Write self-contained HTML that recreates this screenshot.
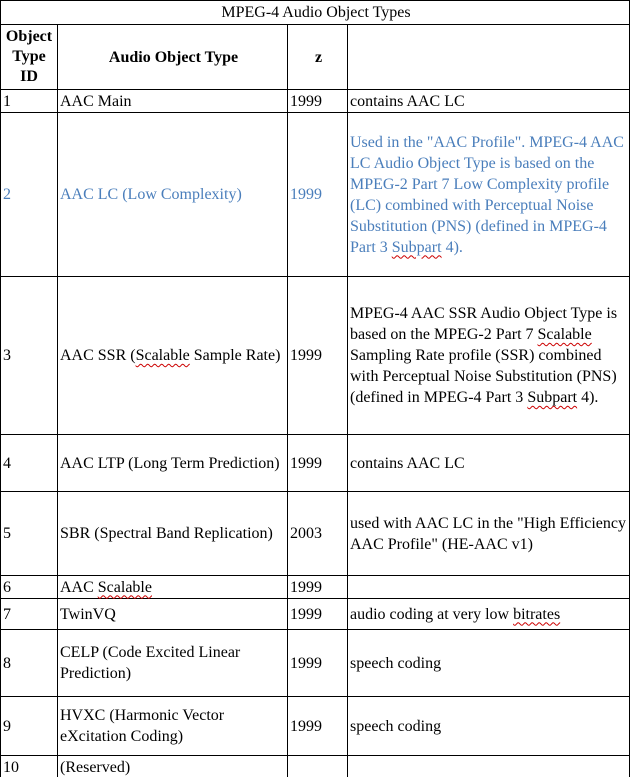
<!DOCTYPE html><html><head><style>
body{margin:0;width:632px;height:777px;background:#fff;overflow:hidden;font-family:"Liberation Serif","Times New Roman",serif;font-size:16px;color:#000}
.h{position:absolute;height:1px;background:#000}
.v{position:absolute;width:1px;background:#000}
.c{position:absolute;display:flex;align-items:center;line-height:21px;padding-left:2px;box-sizing:border-box}
.b{color:#4a7ebb}
.w{text-decoration:underline wavy #c00;text-decoration-thickness:1px;text-underline-offset:3px}
</style></head><body>
<div class="h" style="left:0;top:0;width:630px"></div>
<div class="h" style="left:0;top:24px;width:630px"></div>
<div class="h" style="left:0;top:89px;width:630px"></div>
<div class="h" style="left:0;top:112px;width:630px"></div>
<div class="h" style="left:0;top:276px;width:630px"></div>
<div class="h" style="left:0;top:434px;width:630px"></div>
<div class="h" style="left:0;top:491px;width:630px"></div>
<div class="h" style="left:0;top:575px;width:630px"></div>
<div class="h" style="left:0;top:598px;width:630px"></div>
<div class="h" style="left:0;top:629px;width:630px"></div>
<div class="h" style="left:0;top:696px;width:630px"></div>
<div class="h" style="left:0;top:755px;width:630px"></div>
<div class="v" style="left:0;top:0;height:777px"></div>
<div class="v" style="left:629px;top:0;height:777px"></div>
<div class="v" style="left:57px;top:24px;height:753px"></div>
<div class="v" style="left:287px;top:24px;height:753px"></div>
<div class="v" style="left:347px;top:24px;height:753px"></div>

<div class="c" style="left:0;top:1px;width:630px;height:23px;justify-content:center"><div>MPEG-4 Audio Object Types</div></div>
<div class="c" style="left:1px;top:25px;width:56px;height:64px;justify-content:center;text-align:center;font-weight:bold;line-height:20px;padding:0"><div>Object<br>Type<br>ID</div></div>
<div class="c" style="left:58px;top:25px;width:229px;height:64px;justify-content:center;font-weight:bold"><div>Audio Object Type</div></div>
<div class="c" style="left:288px;top:25px;width:59px;height:64px;justify-content:center;font-weight:bold"><div>z</div></div>

<div class="c" style="left:1px;top:90px;width:56px;height:22px"><div>1</div></div>
<div class="c" style="left:58px;top:90px;width:229px;height:22px"><div>AAC Main</div></div>
<div class="c" style="left:288px;top:90px;width:59px;height:22px"><div>1999</div></div>
<div class="c" style="left:348px;top:90px;width:281px;height:22px"><div>contains AAC LC</div></div>

<div class="c b" style="left:1px;top:113px;width:56px;height:163px"><div>2</div></div>
<div class="c b" style="left:58px;top:113px;width:229px;height:163px"><div>AAC LC (Low Complexity)</div></div>
<div class="c b" style="left:288px;top:113px;width:59px;height:163px"><div>1999</div></div>
<div class="c b" style="left:348px;top:113px;width:281px;height:163px"><div>Used in the "AAC Profile". MPEG-4 AAC LC Audio Object Type is based on the MPEG-2 Part 7 Low Complexity profile (LC) combined with Perceptual Noise Substitution (PNS) (defined in MPEG-4 Part 3 <span class="w">Subpart</span> 4).</div></div>

<div class="c" style="left:1px;top:277px;width:56px;height:157px"><div>3</div></div>
<div class="c" style="left:58px;top:277px;width:229px;height:157px"><div>AAC SSR (<span class="w">Scalable</span> Sample Rate)</div></div>
<div class="c" style="left:288px;top:277px;width:59px;height:157px"><div>1999</div></div>
<div class="c" style="left:348px;top:277px;width:281px;height:157px"><div>MPEG-4 AAC SSR Audio Object Type is based on the MPEG-2 Part 7 <span class="w">Scalable</span> Sampling Rate profile (SSR) combined with Perceptual Noise Substitution (PNS) (defined in MPEG-4 Part 3 <span class="w">Subpart</span> 4).</div></div>

<div class="c" style="left:1px;top:435px;width:56px;height:56px"><div>4</div></div>
<div class="c" style="left:58px;top:435px;width:229px;height:56px;white-space:nowrap"><div>AAC LTP (Long Term Prediction)</div></div>
<div class="c" style="left:288px;top:435px;width:59px;height:56px"><div>1999</div></div>
<div class="c" style="left:348px;top:435px;width:281px;height:56px"><div>contains AAC LC</div></div>

<div class="c" style="left:1px;top:492px;width:56px;height:83px"><div>5</div></div>
<div class="c" style="left:58px;top:492px;width:229px;height:83px;white-space:nowrap"><div>SBR (Spectral Band Replication)</div></div>
<div class="c" style="left:288px;top:492px;width:59px;height:83px"><div>2003</div></div>
<div class="c" style="left:348px;top:492px;width:281px;height:83px"><div>used with AAC LC in the "High Efficiency AAC Profile" (HE-AAC v1)</div></div>

<div class="c" style="left:1px;top:576px;width:56px;height:22px"><div>6</div></div>
<div class="c" style="left:58px;top:576px;width:229px;height:22px"><div>AAC <span class="w">Scalable</span></div></div>
<div class="c" style="left:288px;top:576px;width:59px;height:22px"><div>1999</div></div>

<div class="c" style="left:1px;top:599px;width:56px;height:30px"><div>7</div></div>
<div class="c" style="left:58px;top:599px;width:229px;height:30px"><div>TwinVQ</div></div>
<div class="c" style="left:288px;top:599px;width:59px;height:30px"><div>1999</div></div>
<div class="c" style="left:348px;top:599px;width:281px;height:30px"><div>audio coding at very low <span class="w">bitrates</span></div></div>

<div class="c" style="left:1px;top:630px;width:56px;height:66px"><div>8</div></div>
<div class="c" style="left:58px;top:630px;width:229px;height:66px"><div>CELP (Code Excited Linear<br>Prediction)</div></div>
<div class="c" style="left:288px;top:630px;width:59px;height:66px"><div>1999</div></div>
<div class="c" style="left:348px;top:630px;width:281px;height:66px"><div>speech coding</div></div>

<div class="c" style="left:1px;top:697px;width:56px;height:58px"><div>9</div></div>
<div class="c" style="left:58px;top:697px;width:229px;height:58px"><div>HVXC (Harmonic Vector<br>eXcitation Coding)</div></div>
<div class="c" style="left:288px;top:697px;width:59px;height:58px"><div>1999</div></div>
<div class="c" style="left:348px;top:697px;width:281px;height:58px"><div>speech coding</div></div>

<div class="c" style="left:1px;top:756px;width:56px;height:22px"><div>10</div></div>
<div class="c" style="left:58px;top:756px;width:229px;height:22px"><div>(Reserved)</div></div>
</body></html>
